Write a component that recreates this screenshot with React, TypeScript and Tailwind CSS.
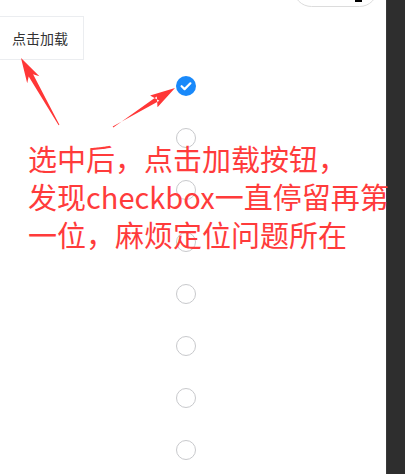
import React from 'react';

const ROWS = 8;

function CheckCircle({ checked }: { checked: boolean }) {
  if (checked) {
    return (
      <span className="flex h-5 w-5 items-center justify-center rounded-full bg-[#1989fa]">
        <svg viewBox="0 0 20 20" className="h-5 w-5">
          <path
            d="M5.6 10.2l3 2.9 5.8-5.8"
            fill="none"
            stroke="#fff"
            strokeWidth="2.2"
            strokeLinecap="round"
            strokeLinejoin="round"
          />
        </svg>
      </span>
    );
  }
  return <span className="block h-5 w-5 rounded-full border border-[#c8c9cc] bg-white" />;
}

// red arrows drawn over the page as notes
function Arrows() {
  return (
    <svg className="pointer-events-none absolute inset-0 h-full w-full" viewBox="0 0 405 474">
      <polygon
        fill="#ff3737"
        points="21,58 39.4,76.2 33.1,74.2 59.4,124.8 58.6,125.2 28.7,76.6 27.2,83.2"
      />
      <polygon
        fill="#ff3737"
        points="175,88 157.5,107.2 156.8,96.6 113.3,127.4 112.7,126.6 159.4,100.8 150.1,95.4"
      />
    </svg>
  );
}

export default function App() {
  const rows = Array.from({ length: ROWS }, (_, i) => i);

  return (
    <div
      className="relative flex h-[474px] w-[405px] overflow-hidden bg-white"
      style={{ fontFamily: '"Noto Sans CJK SC", "Noto Sans", sans-serif' }}
    >
      <div className="relative flex-1">
        {/* floating pill cut off at the top */}
        <div className="absolute right-[8px] top-[-30px] flex h-[37px] w-[85px] items-end justify-end rounded-full border border-[#dcdcdc] bg-white pb-[4px] pr-[15px]">
          <span className="h-[3px] w-[7px] bg-black" />
        </div>

        <button className="-ml-1 mt-4 flex h-11 w-[88px] items-center justify-center border border-[#ebedf0] bg-white text-[14px] text-[#323233]">
          点击加载
        </button>

        <div className="mt-4 flex flex-col gap-8 pl-[176px]">
          {rows.map((i) => (
            <CheckCircle key={i} checked={i === 0} />
          ))}
        </div>
      </div>

      <div className="w-[19px] shrink-0 border-l border-[#3a3a3a] bg-[#2e2e2e]" />

      <Arrows />

      <div className="pointer-events-none absolute left-[28px] top-[139px] w-[380px] text-[29px] leading-[38px] text-[#ff3b3b]">
        <p className="whitespace-nowrap">选中后，点击加载按钮，</p>
        <p className="whitespace-nowrap">发现checkbox一直停留再第</p>
        <p className="whitespace-nowrap">一位，麻烦定位问题所在</p>
      </div>
    </div>
  );
}
